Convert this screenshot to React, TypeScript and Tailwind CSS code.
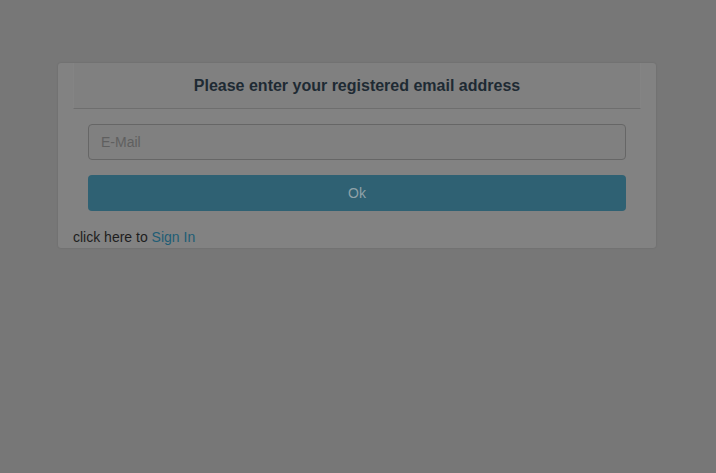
export default function App() {
  return (
    <div
      className="w-[716px] h-[473px] bg-[#777777] pt-[63px] text-[14px]"
      style={{ fontFamily: '"Liberation Sans", Arial, sans-serif' }}
    >
      <div className="mx-[58px] w-[598px] bg-[#828282] rounded-[3px] pb-[1px] shadow-[0_0_2px_rgba(0,0,0,0.15)]">
        <div className="mx-[15px] h-[46px] flex items-center justify-center bg-[#808080] border-x border-b border-x-[#848484] border-b-[#6e6e6e]">
          <h2 className="text-[16px] font-bold text-[#1e2a33]">
            Please enter your registered email address
          </h2>
        </div>
        <div className="px-[30px] pt-[15px] flex flex-col gap-[15px]">
          <input
            type="text"
            placeholder="E-Mail"
            className="h-[36px] w-full rounded-[4px] border border-[#666666] bg-[#808080] px-[12px] text-[14px] text-[#333] placeholder:text-[#5f5f5f] outline-none"
          />
          <button className="h-[36px] w-full rounded-[4px] bg-[#2f6173] text-[14px] text-[#8fa2a8]">
            Ok
          </button>
        </div>
        <p className="px-[15px] mt-[16px] leading-[20px] text-[#1d1d1d]">
          click here to <a className="text-[#1e5d75]">Sign In</a>
        </p>
      </div>
    </div>
  );
}
